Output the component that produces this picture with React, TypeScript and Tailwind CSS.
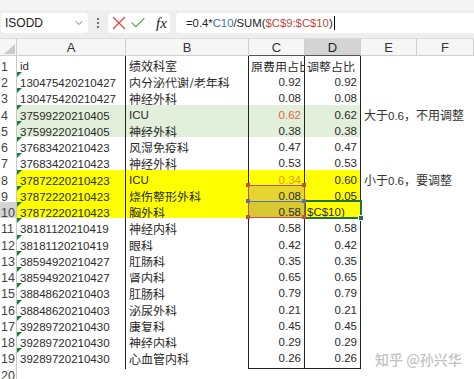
import React from 'react';
import { ChevronDown, X, Check } from 'lucide-react';

type Row = {
  n: number;
  a: string;
  b: string;
  c: string;
  d: string;
  fill?: 'g' | 'y';
  cCls?: string;
  cBg?: string;
  e?: string;
  h: string;
};

const rows: Row[] = [
  { n: 1, a: 'id', b: '绩效科室', c: '原费用占比', d: '调整占比', h: 'h-[16px]' },
  { n: 2, a: '130475420210427', b: '内分泌代谢/老年科', c: '0.92', d: '0.92', h: 'h-[16px]' },
  { n: 3, a: '130475420210427', b: '神经外科', c: '0.08', d: '0.08', h: 'h-[17px]' },
  { n: 4, a: '37599220210405', b: 'ICU', c: '0.62', d: '0.62', fill: 'g', cCls: 'text-[#e0664a]', e: '大于0.6，不用调整', h: 'h-[16px]' },
  { n: 5, a: '37599220210405', b: '神经外科', c: '0.38', d: '0.38', fill: 'g', h: 'h-[16px]' },
  { n: 6, a: '37683420210423', b: '风湿免疫科', c: '0.47', d: '0.47', h: 'h-[16px]' },
  { n: 7, a: '37683420210423', b: '神经外科', c: '0.53', d: '0.53', h: 'h-[17px]' },
  { n: 8, a: '37872220210423', b: 'ICU', c: '0.34', d: '0.60', fill: 'y', cCls: 'text-[#e39a2a]', e: '小于0.6，要调整', h: 'h-[16px]' },
  { n: 9, a: '37872220210423', b: '烧伤整形外科', c: '0.08', d: '0.05', fill: 'y', cBg: 'bg-[#e6d52e]', h: 'h-[16px]' },
  { n: 10, a: '37872220210423', b: '胸外科', c: '0.58', d: '$C$10)', fill: 'y', cBg: 'bg-[#d8c932]', h: 'h-[16px]' },
  { n: 11, a: '38181120210419', b: '神经内科', c: '0.58', d: '0.58', h: 'h-[17px]' },
  { n: 12, a: '38181120210419', b: '眼科', c: '0.42', d: '0.42', h: 'h-[16px]' },
  { n: 13, a: '38594920210427', b: '肛肠科', c: '0.35', d: '0.35', h: 'h-[16px]' },
  { n: 14, a: '38594920210427', b: '肾内科', c: '0.65', d: '0.65', h: 'h-[16px]' },
  { n: 15, a: '38848620210403', b: '肛肠科', c: '0.79', d: '0.79', h: 'h-[17px]' },
  { n: 16, a: '38848620210403', b: '泌尿外科', c: '0.21', d: '0.21', h: 'h-[16px]' },
  { n: 17, a: '39289720210430', b: '康复科', c: '0.45', d: '0.45', h: 'h-[16px]' },
  { n: 18, a: '39289720210430', b: '神经内科', c: '0.29', d: '0.29', h: 'h-[16px]' },
  { n: 19, a: '39289720210430', b: '心血管内科', c: '0.26', d: '0.26', h: 'h-[17px]' },
];

const COLS = 'grid grid-cols-[17px_109px_123px_56px_56px_56px_57px]';

function fillCls(f?: 'g' | 'y') {
  if (f === 'g') return 'bg-[#e2efda]';
  if (f === 'y') return 'bg-[#ffff00]';
  return 'bg-white';
}

function GreenTri() {
  return (
    <svg className="absolute left-0 top-0" width="5" height="5" viewBox="0 0 5 5">
      <polygon points="0,0 5,0 0,5" fill="#1e7b45" />
    </svg>
  );
}

function FormulaBar() {
  return (
    <div className="flex flex-col">
      <div className="h-[10px] bg-[#f5f5f5]" />
      <div className="h-[28px] bg-[#eeeeee] flex items-start pt-[3px]">
        <div className="ml-[1px] w-[87px] h-[20px] bg-white rounded-[4px] flex items-center justify-between pl-[4px] pr-[3px]">
          <span className="text-[12px] text-[#222] leading-none">ISODD</span>
          <ChevronDown size={12} strokeWidth={1.6} className="text-[#555]" />
        </div>
        <div className="w-[20px] h-[20px] flex items-center justify-center">
          <svg width="4" height="12" viewBox="0 0 4 12">
            <circle cx="2" cy="2" r="1.1" fill="#555" />
            <circle cx="2" cy="6" r="1.1" fill="#555" />
            <circle cx="2" cy="10" r="1.1" fill="#555" />
          </svg>
        </div>
        <div className="w-[62px] h-[20px] bg-white rounded-[4px] flex items-center">
          <X size={22} strokeWidth={1.4} className="text-[#e0463e]" />
          <Check size={18} strokeWidth={1.5} className="ml-[-1px] text-[#5aac5a]" />
          <span className="ml-[9px] font-['Liberation_Serif',serif] italic text-[15px] leading-none text-[#222]">fx</span>
        </div>
        <div className="ml-[6px] flex-1 h-[20px] bg-white rounded-l-[4px] flex items-center pl-[10px] text-[11.3px] text-[#222] whitespace-nowrap">
          <span>=0.4*</span>
          <span className="text-[#3a72c2]">C10</span>
          <span>/SUM(</span>
          <span className="text-[#c0473a]">$C$9:$C$10</span>
          <span>)</span>
          <span className="ml-[1px] w-[1px] h-[14px] bg-black" />
        </div>
      </div>
    </div>
  );
}

function HeaderRow() {
  const letters = ['A', 'B', 'C', 'D', 'E', 'F'];
  return (
    <div className={`${COLS} h-[18px] bg-[#f6f6f6] text-[13px] text-[#333] border-t border-[#dcdcdc]`}>
      <div className="relative border-r border-b border-[#cfcfcf]">
        <svg className="absolute right-[1px] bottom-[1px]" width="11" height="10" viewBox="0 0 11 10">
          <polygon points="11,0 11,10 0,10" fill="#c9c9c9" />
        </svg>
      </div>
      {letters.map((l) => {
        const sel = l === 'D';
        const cd = l === 'C' || l === 'D';
        return (
          <div
            key={l}
            className={`flex items-center justify-center leading-none border-r border-b ${
              sel ? 'bg-[#d4d4d4] text-[#222]' : ''
            } ${cd ? 'border-b-[#555] border-r-[#cfcfcf]' : 'border-[#cfcfcf]'}`}
          >
            {l}
          </div>
        );
      })}
    </div>
  );
}

function DataRow({ r }: { r: Row }) {
  const bg = fillCls(r.fill);
  const isHeader = r.n === 1;
  const cjk = "font-['Noto_Sans_CJK_SC',sans-serif] text-[12px]";
  return (
    <div className={`${COLS} ${r.h}`}>
      <div
        className={`flex items-center pl-[1px] pt-[2px] text-[12.5px] text-[#444] border-r border-[#c8c8c8] ${
          r.n === 10 ? 'bg-[#d4d4d4] text-[#222]' : 'bg-white'
        }`}
      >
        {r.n}
      </div>
      <div
        className={`relative flex items-center pl-[3px] pt-[2px] text-[11.5px] text-[#2a2a2a] border-r border-[#222] whitespace-nowrap ${bg} ${
          isHeader ? 'border-b border-b-[#d6d6d6]' : ''
        }`}
      >
        {!isHeader && <GreenTri />}
        {r.a}
      </div>
      <div
        className={`flex items-center pl-[3px] pt-[1px] text-[#2a2a2a] border-r border-[#222] whitespace-nowrap overflow-hidden ${bg} ${
          r.b === 'ICU' ? 'text-[11.5px]' : cjk
        } ${isHeader ? 'border-b border-b-[#d6d6d6]' : ''}`}
      >
        {r.b}
      </div>
      <div
        className={`flex items-center pt-[2px] border-r border-b border-[#222] whitespace-nowrap overflow-hidden ${
          r.cBg ?? bg
        } ${isHeader ? `justify-start pl-[2px] pt-[1px] ${cjk} text-[#2a2a2a]` : `justify-end pr-[3px] text-[11.5px] ${r.cCls ?? 'text-[#2a2a2a]'}`}`}
      >
        {r.c}
      </div>
      <div
        className={`flex items-center pt-[2px] border-r border-b border-[#222] whitespace-nowrap overflow-hidden text-[#2a2a2a] ${bg} ${
          isHeader
            ? `justify-start pl-[2px] pt-[1px] ${cjk}`
            : r.n === 10
            ? 'justify-start pl-[2px] text-[11.5px]'
            : 'justify-end pr-[3px] text-[11.5px]'
        }`}
      >
        {r.d}
      </div>
      <div className={`flex items-center pl-[3px] pt-[1px] whitespace-nowrap overflow-visible text-[#333] ${cjk}`}>
        {r.e ? (
          <span>
            {r.e.split(/(0\.6)/).map((p, i) =>
              p === '0.6' ? (
                <span key={i} className="font-['Liberation_Sans',sans-serif] text-[11.5px]">
                  {p}
                </span>
              ) : (
                <span key={i}>{p}</span>
              )
            )}
          </span>
        ) : null}
      </div>
      <div />
    </div>
  );
}

export default function App() {
  return (
    <div className="relative w-[474px] h-[379px] overflow-hidden bg-white font-['Liberation_Sans','Noto_Sans_CJK_SC',sans-serif]">
      <FormulaBar />
      <HeaderRow />
      {rows.map((r) => (
        <DataRow key={r.n} r={r} />
      ))}
      <div className={`${COLS} h-[15px]`}>
        <div className="flex items-center pl-[1px] pt-[2px] text-[12.5px] text-[#444] border-r border-[#c8c8c8]">20</div>
      </div>

      {/* active cell D10 */}
      <div className="absolute left-[304px] top-[200px] w-[58px] h-[19px] border-2 border-[#217346]" />
      <div className="absolute left-[358px] top-[215px] w-[6px] h-[6px] bg-[#217346] border border-white" />

      {/* reference highlight C10 (blue) */}
      <div className="absolute left-[248px] top-[201px] w-[57px] h-[17px] border border-[#4a78c8]" />
      <div className="absolute left-[246px] top-[199px] w-[4px] h-[4px] bg-[#4a78c8]" />
      <div className="absolute left-[302px] top-[199px] w-[4px] h-[4px] bg-[#4a78c8]" />

      {/* reference highlight C9:C10 (red) */}
      <div className="absolute left-[248px] top-[185px] w-[57px] h-[33px] border border-[#c0504d]" />
      <div className="absolute left-[246px] top-[183px] w-[4px] h-[4px] bg-[#c0504d]" />
      <div className="absolute left-[302px] top-[183px] w-[4px] h-[4px] bg-[#c0504d]" />
      <div className="absolute left-[246px] top-[215px] w-[4px] h-[4px] bg-[#c0504d]" />
      <div className="absolute left-[302px] top-[215px] w-[4px] h-[4px] bg-[#c0504d]" />

      {/* watermark */}
      <div className="absolute left-[375px] top-[349px] text-[14px] font-medium text-[#c2c2c2] whitespace-nowrap font-['Noto_Sans_CJK_SC',sans-serif]">
        知乎 @孙兴华
      </div>
    </div>
  );
}
